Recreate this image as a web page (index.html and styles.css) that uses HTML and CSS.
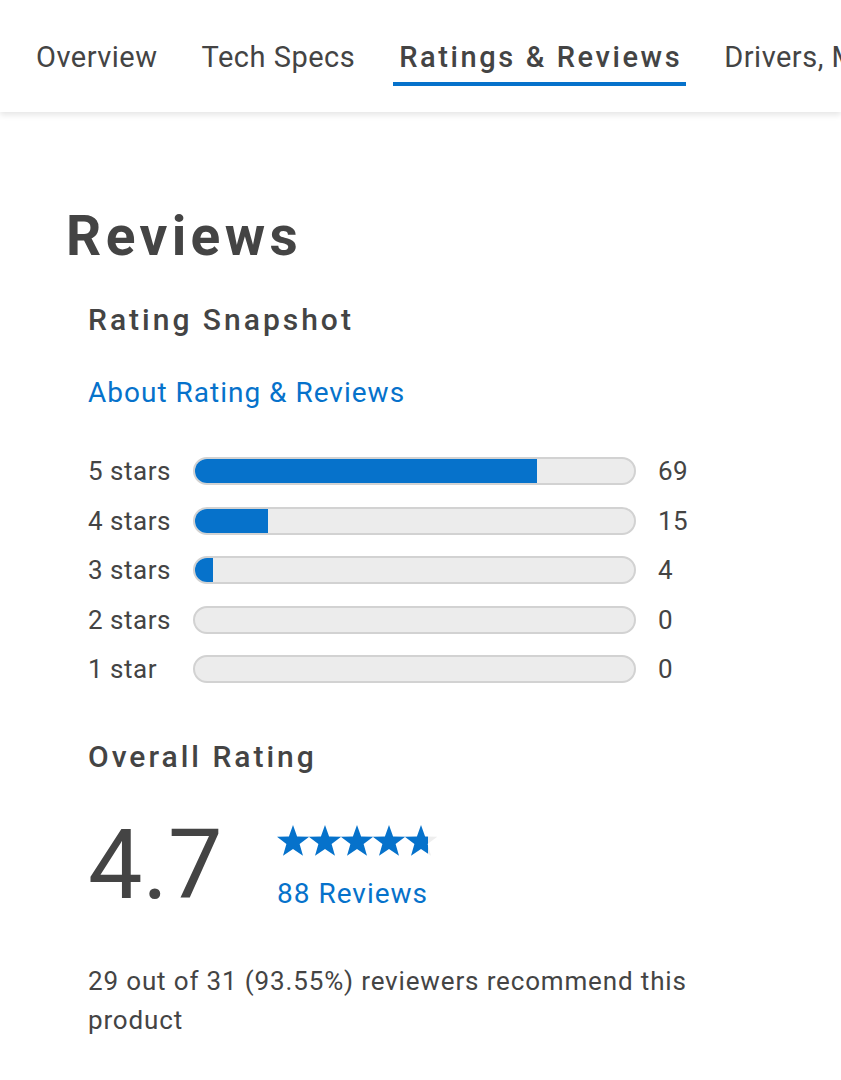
FILE: index.html
```html
<!DOCTYPE html>
<html lang="en">
<head>
<meta charset="utf-8">
<title>Ratings &amp; Reviews</title>
<link rel="stylesheet" href="styles.css">
</head>
<body>
<nav class="tabs">
  <a class="tab">Overview</a>
  <a class="tab">Tech Specs</a>
  <a class="tab active">Ratings &amp; Reviews</a>
  <a class="tab">Drivers, Manuals &amp; Support</a>
</nav>

<main class="reviews">
  <h1 class="title">Reviews</h1>

  <section class="block">
    <h2 class="subtitle">Rating Snapshot</h2>
    <a class="link about">About Rating &amp; Reviews</a>

    <div class="histogram">
      <div class="row">
        <span class="label">5 stars</span>
        <span class="track"><span class="fill" style="width: 78.4%"></span></span>
        <span class="count">69</span>
      </div>
      <div class="row">
        <span class="label">4 stars</span>
        <span class="track"><span class="fill" style="width: 17%"></span></span>
        <span class="count">15</span>
      </div>
      <div class="row">
        <span class="label">3 stars</span>
        <span class="track"><span class="fill" style="width: 4.5%"></span></span>
        <span class="count">4</span>
      </div>
      <div class="row">
        <span class="label">2 stars</span>
        <span class="track"></span>
        <span class="count">0</span>
      </div>
      <div class="row">
        <span class="label">1 star</span>
        <span class="track"></span>
        <span class="count">0</span>
      </div>
    </div>
  </section>

  <section class="block">
    <h2 class="subtitle">Overall Rating</h2>
    <div class="overall">
      <span class="score">4.7</span>
      <div class="summary">
        <span class="stars" aria-label="4.7 out of 5 stars">
          <svg class="star-row" width="162" height="32" viewBox="0 0 162 32">
            <defs>
              <!-- five-point star, outer radius 17, centred at (16, 17) -->
              <path id="star" d="M16 0 L20.1 11.4 L32.2 11.7 L22.6 19.1 L26 30.8 L16 23.9 L6 30.8 L9.4 19.1 L-0.2 11.7 L11.9 11.4 Z"/>
              <!-- partial fill for the last star (0.7 of it) -->
              <linearGradient id="partial" x1="0" y1="0" x2="1" y2="0">
                <stop offset="0.72" stop-color="#0672cb"/>
                <stop offset="0.72" stop-color="#eeeeee"/>
              </linearGradient>
            </defs>
            <use href="#star" x="0" fill="#0672cb"/>
            <use href="#star" x="32" fill="#0672cb"/>
            <use href="#star" x="64" fill="#0672cb"/>
            <use href="#star" x="96" fill="#0672cb"/>
            <use href="#star" x="128" fill="url(#partial)"/>
          </svg>
        </span>
        <a class="link count-link">88 Reviews</a>
      </div>
    </div>
    <p class="recommend">29 out of 31 (93.55%) reviewers recommend this product</p>
  </section>
</main>
</body>
</html>
```

FILE: styles.css
```css
* { box-sizing: border-box; }

html, body {
  margin: 0;
  padding: 0;
  background: #ffffff;
}

body {
  font-family: Roboto, "Noto Sans", "Liberation Sans", sans-serif;
  color: #444444;
  width: 841px;
  overflow: hidden;
}

/* top tab bar */
.tabs {
  display: flex;
  gap: 32px;
  height: 112px;
  padding: 0 0 0 30px;
  background: #ffffff;
  box-shadow: 0 3px 6px rgba(0, 0, 0, 0.10);
  white-space: nowrap;
  overflow: hidden;
  position: relative;
}

.tab {
  display: block;
  flex: none;
  padding: 40px 6px 0;
  height: 86px;
  font-size: 29px;
  letter-spacing: 0.5px;
  color: #444444;
  border-bottom: 4px solid transparent;
}

.tab.active {
  font-weight: 500;
  letter-spacing: 2.6px;
  padding-right: 4px;
  border-bottom-color: #0672cb;
}

/* content */
.reviews {
  padding: 91px 0 0 66px;
}

.title {
  margin: 0;
  font-size: 55px;
  font-weight: 700;
  letter-spacing: 4.4px;
  line-height: 66px;
  color: #444444;
}

.block {
  padding-left: 22px;
}

.subtitle {
  margin: 0;
  font-size: 30px;
  font-weight: 500;
  letter-spacing: 3px;
  line-height: 40px;
  color: #444444;
}

.block:first-of-type .subtitle {
  margin-top: 31px;
}

.link {
  color: #0672cb;
  text-decoration: none;
}

.about {
  display: block;
  margin-top: 33px;
  font-size: 28px;
  letter-spacing: 1px;
  line-height: 40px;
}

.histogram {
  display: flex;
  flex-direction: column;
  gap: 21.5px;
  margin-top: 44px;
  width: 620px;
}

.row {
  display: flex;
  align-items: center;
  height: 28px;
  font-size: 26px;
  letter-spacing: 0.5px;
  color: #444444;
}

.label {
  width: 105px;
  flex: none;
}

.track {
  flex: none;
  width: 443px;
  height: 28px;
  border: 2px solid #d2d2d2;
  border-radius: 14px;
  background: #ececec;
  overflow: hidden;
  display: flex;
}

.fill {
  display: block;
  margin: -2px 0 -2px -2px;
  height: 28px;
  background: #0672cb;
  border-radius: 14px 0 0 14px;
}

.count {
  margin-left: 22px;
}

.block + .block .subtitle {
  margin-top: 54px;
}

.overall {
  display: flex;
  align-items: flex-start;
  margin-top: 33px;
}

.score {
  font-size: 97px;
  font-weight: 400;
  line-height: 110px;
  color: #444444;
  width: 189px;
  flex: none;
}

.summary {
  display: flex;
  flex-direction: column;
  padding-top: 15px;
}

.star-row {
  display: block;
}

.count-link {
  font-size: 28px;
  letter-spacing: 1px;
  line-height: 40px;
  margin-top: 17px;
}

.recommend {
  margin: 42px 0 0;
  width: 640px;
  font-size: 26px;
  letter-spacing: 0.85px;
  line-height: 39px;
  color: #444444;
}
```
